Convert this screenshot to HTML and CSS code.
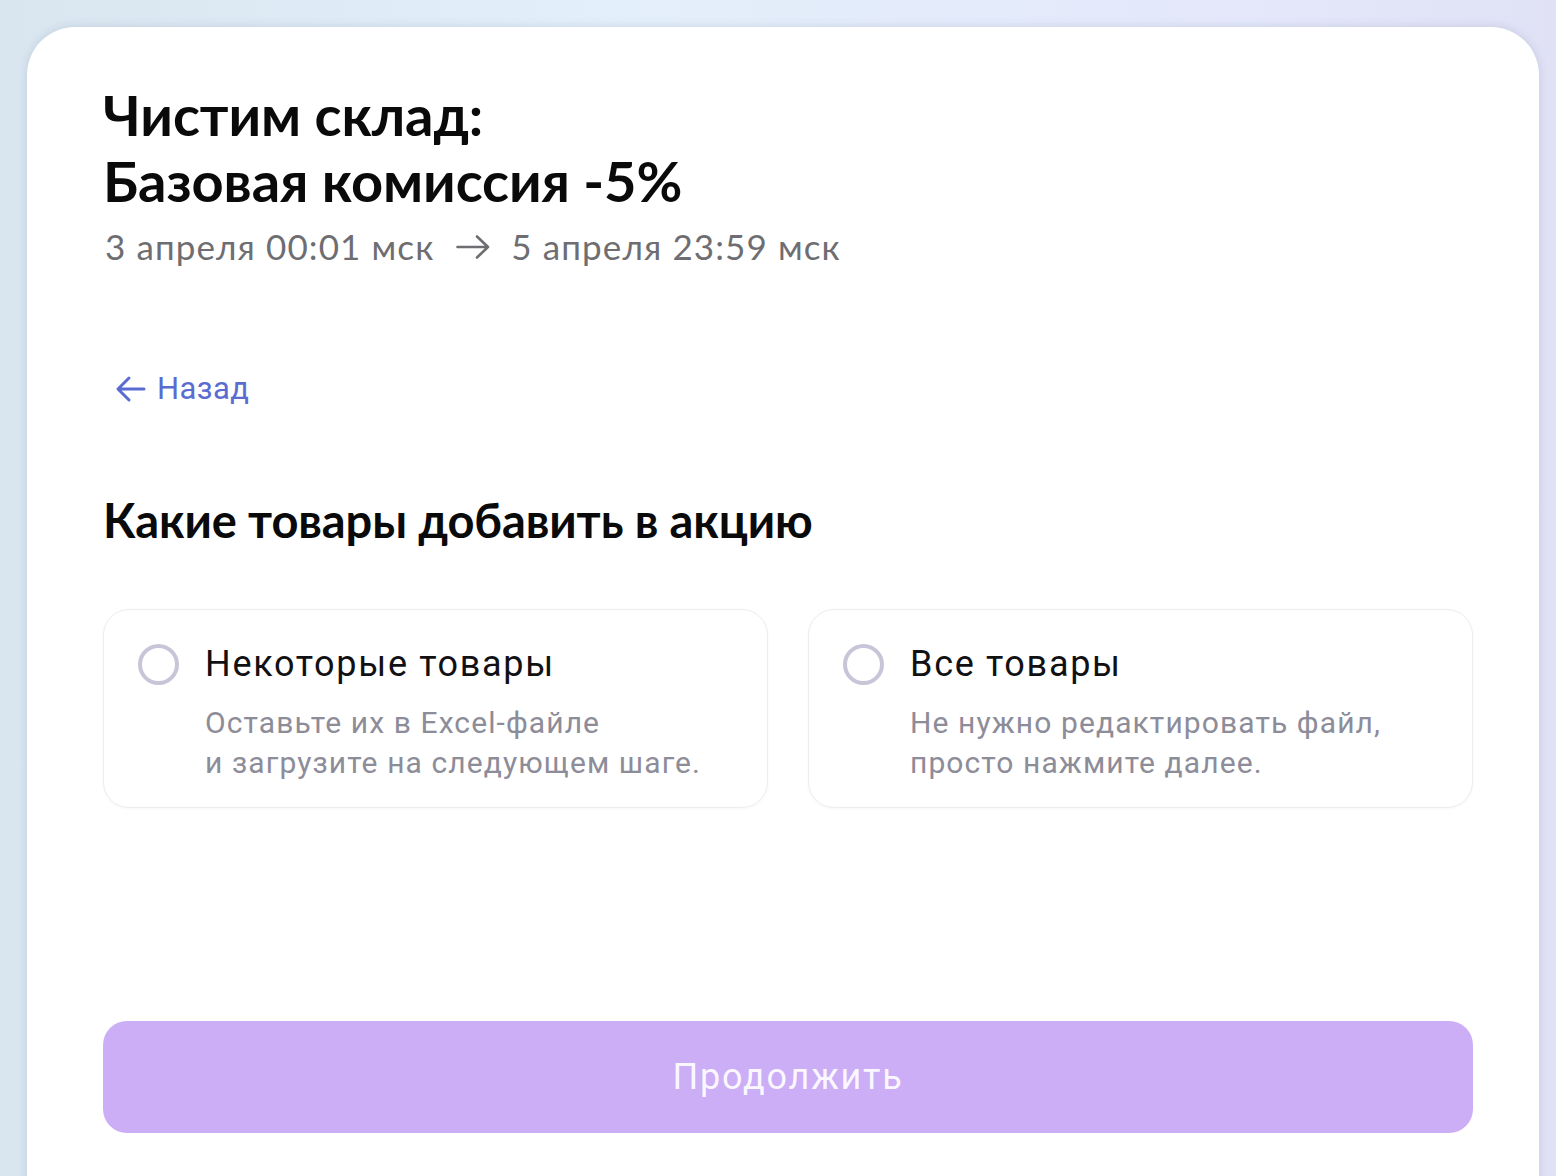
FILE: index.html
```html
<!DOCTYPE html>
<html lang="ru">
<head>
<meta charset="utf-8">
<title>Чистим склад</title>
<link rel="stylesheet" href="styles.css">
</head>
<body>
<main class="sheet">
  <h1 class="title">Чистим склад:<br>Базовая комиссия -5%</h1>
  <p class="dates">
    <span>3 апреля 00:01 мск</span>
    <svg class="dates-arrow" width="34" height="24" viewBox="0 0 34 24" aria-hidden="true">
      <path d="M1.5 12H32M21 1.5L32 12 21 22.5" fill="none" stroke="#6e6e72" stroke-width="2.6" stroke-linecap="round" stroke-linejoin="round"/>
    </svg>
    <span>5 апреля 23:59 мск</span>
  </p>

  <a class="back" href="#">
    <svg class="back-icon" width="32" height="28" viewBox="0 0 32 28" aria-hidden="true">
      <path d="M29 14H4M14 3L3 14l11 11" fill="none" stroke="#5b6cd1" stroke-width="3" stroke-linecap="round" stroke-linejoin="round"/>
    </svg>
    <span>Назад</span>
  </a>

  <h2 class="question">Какие товары добавить в акцию</h2>

  <div class="options">
    <label class="option">
      <span class="radio"></span>
      <span class="option-body">
        <span class="option-title">Некоторые товары</span>
        <span class="option-desc">Оставьте их в Excel-файле<br>и загрузите на следующем шаге.</span>
      </span>
    </label>
    <label class="option">
      <span class="radio"></span>
      <span class="option-body">
        <span class="option-title">Все товары</span>
        <span class="option-desc">Не нужно редактировать файл,<br>просто нажмите далее.</span>
      </span>
    </label>
  </div>

  <button class="continue" type="button">Продолжить</button>
</main>
</body>
</html>
```

FILE: styles.css
```css
* { box-sizing: border-box; }

html, body {
  margin: 0;
  height: 100%;
  overflow: hidden;
}

body {
  background: linear-gradient(90deg, #d9e6f0 0%, #e3effa 40%, #e4e8fa 80%, #e0e1f5 100%);
  font-family: "Lato", "Noto Sans", sans-serif;
}

.sheet {
  margin: 27px 17px 0 27px;
  min-height: 1300px;
  background: #ffffff;
  border-radius: 48px 48px 0 0;
  box-shadow: 0 0 10px rgba(60, 80, 120, 0.16);
  padding: 55px 66px 0 76px;
  display: flex;
  flex-direction: column;
}

.title {
  margin: 0;
  font-family: "Lato", sans-serif;
  font-weight: 700;
  font-size: 56px;
  line-height: 66px;
  color: #0a0a0a;
  letter-spacing: -0.1px;
}

.dates {
  margin: 10px 0 0 2px;
  display: flex;
  align-items: center;
  font-family: "Lato", sans-serif;
  font-size: 35px;
  line-height: 44px;
  letter-spacing: 1.1px;
  color: #6e6e72;
}

.dates-arrow {
  display: block;
  margin: 2px 21px 0 22px;
}

.back {
  margin: 101px 0 0 12px;
  display: flex;
  align-items: center;
  gap: 10px;
  align-self: flex-start;
  text-decoration: none;
  color: #5b6cd1;
  font-family: "Roboto", sans-serif;
  font-size: 31px;
  line-height: 40px;
  letter-spacing: 0.4px;
}

.back-icon { display: block; }

.question {
  margin: 81px 0 0 0;
  font-family: "Lato", sans-serif;
  font-weight: 700;
  font-size: 47px;
  line-height: 60px;
  color: #0a0a0a;
  letter-spacing: -0.1px;
}

.options {
  margin-top: 59px;
  display: grid;
  grid-template-columns: 1fr 1fr;
  gap: 40px;
}

.option {
  display: flex;
  align-items: flex-start;
  gap: 26px;
  border: 1px solid #ececf1;
  border-radius: 26px;
  padding: 32px 30px 24px 34px;
  box-shadow: 0 1px 3px rgba(40, 40, 80, 0.04);
  cursor: pointer;
}

.radio {
  flex: none;
  width: 41px;
  height: 41px;
  margin-top: 2px;
  border: 4px solid #c7c5d7;
  border-radius: 50%;
}

.option-body {
  display: flex;
  flex-direction: column;
  gap: 17px;
}

.option-title {
  font-family: "Roboto", sans-serif;
  font-size: 36px;
  line-height: 44px;
  color: #111114;
  letter-spacing: 1.7px;
}

.option-desc {
  font-family: "Roboto", sans-serif;
  font-size: 30px;
  line-height: 40px;
  color: #8d8c99;
  letter-spacing: 1.1px;
}

.continue {
  margin-top: 213px;
  height: 112px;
  border: none;
  border-radius: 24px;
  background: #ccaef7;
  color: rgba(255, 255, 255, 0.92);
  font-family: "Roboto", sans-serif;
  font-size: 36px;
  letter-spacing: 1.8px;
  cursor: pointer;
}
```
